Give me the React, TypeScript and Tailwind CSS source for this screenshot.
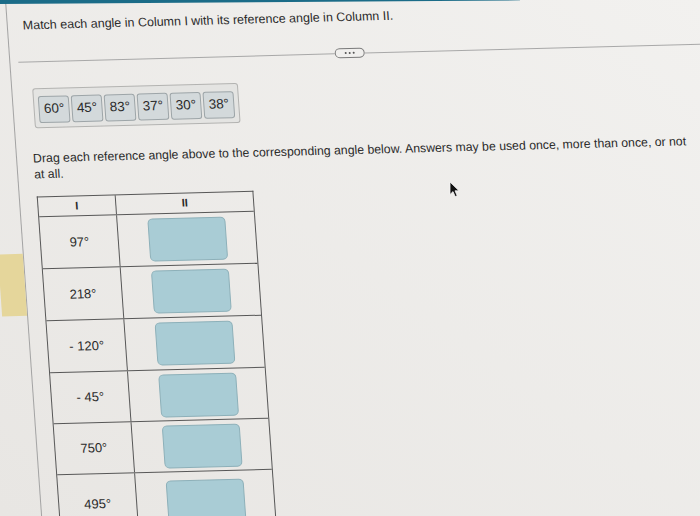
const chips = ['60°', '45°', '83°', '37°', '30°', '38°']

// column I values, row heights follow the photo (perspective makes them uneven)
const rows = [
  { angle: '97°', h: 'h-[52px]' },
  { angle: '218°', h: 'h-[52px]' },
  { angle: '- 120°', h: 'h-[52px]' },
  { angle: '- 45°', h: 'h-[51px]' },
  { angle: '750°', h: 'h-[51px]' },
  { angle: '495°', h: 'h-[60px]' },
]

function Cursor() {
  return (
    <svg className="absolute left-[449px] top-[181px]" width="11" height="17" viewBox="0 0 11 17">
      <path d="M1 1 L1 13.5 L4 10.6 L6.2 15.6 L8.2 14.7 L6 9.8 L10 9.8 Z" fill="#111" stroke="#f4f4f4" strokeWidth="0.8" />
    </svg>
  )
}

export default function App() {
  return (
    <div className="relative h-[516px] w-[700px] overflow-hidden bg-linear-to-bl from-[#f2f1ef] to-[#e8e6e3] font-['Liberation_Sans',Arial,sans-serif] text-[#2a2a2a]">
      {/* photo is taken at an angle, so the page is sheared a little */}
      <div className="flex w-[820px] origin-top-left skew-x-4 -skew-y-[1.5deg]">
        <div className="ml-[-20px] h-[580px] w-[26px] shrink-0 border-r border-[#a3a3a3]">
          <div className="mt-[254px] h-[62px] bg-[#e5d69b]" />
        </div>

        <div className="flex-1">
          <h1 className="pl-[15px] pt-[18px] text-[12.5px] leading-4">
            Match each angle in Column I with its reference angle in Column II.
          </h1>

          <div className="ml-[8px] mt-[22px] flex h-[12px] items-center">
            <div className="h-px w-[317px] bg-[#a8a8a8]" />
            <div className="flex h-[10px] w-[30px] items-center justify-center gap-[2px] rounded-full border border-[#7a7a7a] bg-[#f0efed]">
              <span className="h-[2px] w-[2px] rounded-full bg-[#555]" />
              <span className="h-[2px] w-[2px] rounded-full bg-[#555]" />
              <span className="h-[2px] w-[2px] rounded-full bg-[#555]" />
            </div>
            <div className="h-px flex-1 bg-[#a8a8a8]" />
          </div>

          <div className="ml-[20px] mt-[21px] inline-flex gap-[2px] rounded-[3px] border border-[#b3b3b1] bg-[#e4e4e2] px-[4px] pb-[4px] pt-[7px]">
            {chips.map((c) => (
              <div
                key={c}
                className="flex h-[27px] w-[31px] items-center justify-center rounded-[3px] border border-[#9da5a8] bg-[#d3d9db] text-[13.5px]"
              >
                {c}
              </div>
            ))}
          </div>

          <p className="mt-[22px] whitespace-nowrap pl-[16px] text-[12.3px] leading-4">
            Drag each reference angle above to the corresponding angle below. Answers may be used once, more than once, or not
            <br />
            at all.
          </p>

          <div className="ml-[17px] mt-[14px] w-[217px] border-x border-t border-[#575757]">
            <div className="flex h-[20px] border-b border-[#575757] text-[11px] font-bold">
              <div className="flex w-[78px] items-center justify-center border-r border-[#575757]">I</div>
              <div className="flex flex-1 items-center justify-center">II</div>
            </div>
            {rows.map((r) => (
              <div key={r.angle} className={`flex ${r.h} border-b border-[#575757]`}>
                <div className="flex w-[78px] items-center justify-center border-r border-[#575757] text-[13px]">
                  {r.angle}
                </div>
                <div className="flex flex-1 items-center justify-center">
                  <div className="h-[43px] w-[78px] rounded-[5px] border border-[#8db0b9] bg-[#a9ccd5]" />
                </div>
              </div>
            ))}
          </div>
        </div>
      </div>

      <div className="absolute left-0 top-0 h-[4px] w-[520px] origin-top-left -skew-y-[0.4deg] bg-[#1b6c88]" />
      <Cursor />
    </div>
  )
}
